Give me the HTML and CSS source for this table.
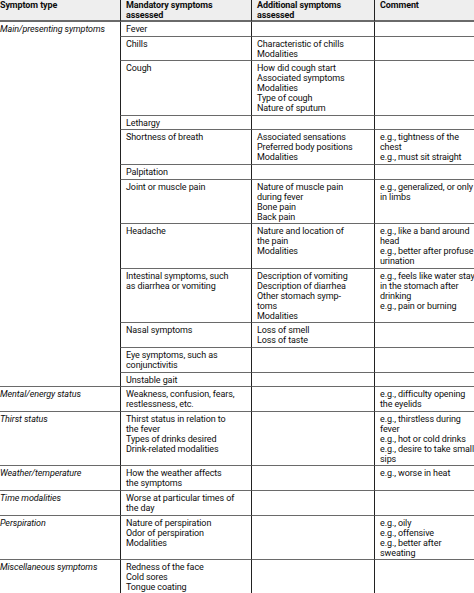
FILE: index.html
```html
<!DOCTYPE html>
<html>
<head>
<meta charset="utf-8">
<link rel="stylesheet" href="styles.css">
</head>
<body>
<table class="sym">
<colgroup>
<col class="c1"><col class="c2"><col class="c3"><col class="c4">
</colgroup>
<thead>
<tr><th class="first">Symptom type</th><th>Mandatory symptoms<br>assessed</th><th>Additional symptoms<br>assessed</th><th>Comment</th></tr>
</thead>
<tbody>
<tr class="top"><td class="first type" rowspan="12">Main/presenting symptoms</td><td>Fever</td><td></td><td></td></tr>
<tr><td>Chills</td><td>Characteristic of chills<br>Modalities</td><td></td></tr>
<tr><td>Cough</td><td>How did cough start<br>Associated symptoms<br>Modalities<br>Type of cough<br>Nature of sputum</td><td></td></tr>
<tr><td>Lethargy</td><td></td><td></td></tr>
<tr><td>Shortness of breath</td><td>Associated sensations<br>Preferred body positions<br>Modalities</td><td>e.g., tightness of the<br>chest<br>e.g., must sit straight</td></tr>
<tr><td>Palpitation</td><td></td><td></td></tr>
<tr><td>Joint or muscle pain</td><td>Nature of muscle pain<br>during fever<br>Bone pain<br>Back pain</td><td>e.g., generalized, or only<br>in limbs</td></tr>
<tr><td>Headache</td><td>Nature and location of<br>the pain<br>Modalities</td><td>e.g., like a band around<br>head<br>e.g., better after profuse<br>urination</td></tr>
<tr><td>Intestinal symptoms, such<br>as diarrhea or vomiting</td><td>Description of vomiting<br>Description of diarrhea<br>Other stomach symp-<br>toms<br>Modalities</td><td>e.g., feels like water stays<br>in the stomach after<br>drinking<br>e.g., pain or burning</td></tr>
<tr><td>Nasal symptoms</td><td>Loss of smell<br>Loss of taste</td><td></td></tr>
<tr><td>Eye symptoms, such as<br>conjunctivitis</td><td></td><td></td></tr>
<tr><td>Unstable gait</td><td></td><td></td></tr>
<tr><td class="first type">Mental/energy status</td><td>Weakness, confusion, fears,<br>restlessness, etc.</td><td></td><td>e.g., difficulty opening<br>the eyelids</td></tr>
<tr><td class="first type">Thirst status</td><td>Thirst status in relation to<br>the fever<br>Types of drinks desired<br>Drink-related modalities</td><td></td><td>e.g., thirstless during<br>fever<br>e.g., hot or cold drinks<br>e.g., desire to take small<br>sips</td></tr>
<tr><td class="first type">Weather/temperature</td><td>How the weather affects<br>the symptoms</td><td></td><td>e.g., worse in heat</td></tr>
<tr><td class="first type">Time modalities</td><td>Worse at particular times of<br>the day</td><td></td><td></td></tr>
<tr><td class="first type">Perspiration</td><td>Nature of perspiration<br>Odor of perspiration<br>Modalities</td><td></td><td>e.g., oily<br>e.g., offensive<br>e.g., better after<br>sweating</td></tr>
<tr><td class="first type">Miscellaneous symptoms</td><td>Redness of the face<br>Cold sores<br>Tongue coating</td><td></td><td></td></tr>
</tbody>
</table>
</body>
</html>
```

FILE: styles.css
```css
html, body {
  margin: 0;
  padding: 0;
  background: #ffffff;
  overflow: hidden;
}
body {
  width: 474px;
  height: 593px;
}
.sym {
  border-collapse: separate;
  border-spacing: 0;
  table-layout: fixed;
  width: 509px;
  margin: -2px 0 0 -5px;
  font-family: Roboto, "Liberation Sans", sans-serif;
  font-size: 9px;
  letter-spacing: -0.1px;
  line-height: 10px;
  color: #0d0d0d;
}
.c1 { width: 125px; }
.c2 { width: 131px; }
.c3 { width: 123px; }
.c4 { width: 130px; }
.sym th, .sym td {
  padding: 2px 4px 1.6px 5px;
  text-align: left;
  vertical-align: top;
  white-space: nowrap;
  overflow: hidden;
  border-left: 1px solid #222;
}
.sym th {
  padding-bottom: 0;
  font-weight: 700;
  background: #eeeeee;
  border-bottom: 2px solid #6a6a6a;
}
.sym td {
  border-top: 1px solid #6a6a6a;
}
.sym tr.top td {
  border-top: none;
}
.sym .first {
  border-left: none;
}
.sym .type {
  font-style: italic;
}
```
